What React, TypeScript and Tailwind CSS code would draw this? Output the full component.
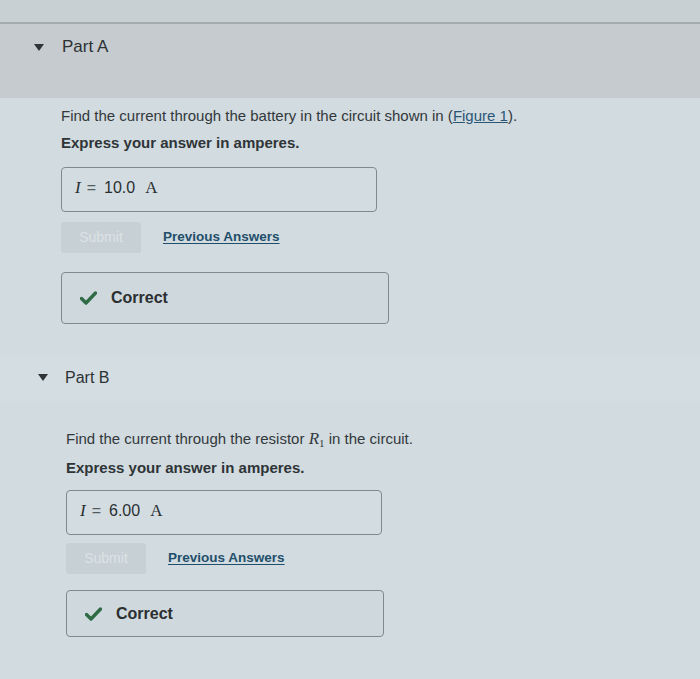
import React from "react";

function Caret() {
  return (
    <svg width="10" height="8" viewBox="0 0 10 8" className="shrink-0">
      <path d="M0 0 L10 0 L5 7 Z" fill="#2f3437" />
    </svg>
  );
}

function Check() {
  return (
    <svg width="17" height="14" viewBox="0 0 17 14" className="shrink-0">
      <path d="M1.5 7.5 L6 12 L15.5 2" fill="none" stroke="#2f6b45" strokeWidth="3.4" strokeLinecap="round" strokeLinejoin="round" />
    </svg>
  );
}

function Answer({ value }: { value: string }) {
  return (
    <div className="h-[45px] w-[316px] rounded-[4px] border border-[#7f898e] bg-[#d3dde1] flex items-center pl-[13px] pb-[4px] gap-[6px] text-[16px] text-[#2b2f31]">
      <span className="font-['Liberation_Serif'] italic text-[17px]">I</span>
      <span className="text-[#555c60]">=</span>
      <span className="ml-[2px]">{value}</span>
      <span className="ml-[4px] font-['Liberation_Serif'] text-[17px]">A</span>
    </div>
  );
}

function Actions({ mt }: { mt: string }) {
  return (
    <div className={`flex items-center gap-[22px] ${mt}`}>
      <div className="h-[31px] w-[80px] rounded-[3px] bg-[#c7d0d4] flex items-center justify-center text-[14px] text-[#dce3e6]">
        Submit
      </div>
      <span className="text-[13.5px] font-bold text-[#1f4f6b] underline underline-offset-2">Previous Answers</span>
    </div>
  );
}

function Correct({ w, h, mt }: { w: string; h: string; mt: string }) {
  return (
    <div className={`${w} ${h} ${mt} rounded-[4px] border border-[#80898d] bg-[#cfd9dd] flex items-center pl-[18px] gap-[14px]`}>
      <Check />
      <span className="text-[16px] font-bold text-[#2b2f31]">Correct</span>
    </div>
  );
}

export default function App() {
  return (
    <div className="w-[700px] min-h-[679px] bg-[#d1dbe0] font-['Liberation_Sans',Arial,sans-serif] text-[#33383b]">
      <div className="h-[24px] bg-[#c9d0d4] border-b-2 border-[#a3abaf]" />

      <section>
        <div className="h-[74px] bg-[#c5cbce] flex items-start gap-[18px] pl-[34px] pt-[20px]">
          <Caret />
          <span className="text-[17px] leading-[20px] -mt-[7px] text-[#2c3134]">Part A</span>
        </div>
        <div className="pl-[61px] pt-[9px]">
          <p className="text-[15px] leading-[18px]">
            Find the current through the battery in the circuit shown in (
            <span className="text-[#2a5675] underline">Figure 1</span>).
          </p>
          <p className="mt-[9px] text-[15px] leading-[18px] font-bold text-[#2f3437]">Express your answer in amperes.</p>
          <div className="mt-[15px]">
            <Answer value="10.0" />
          </div>
          <Actions mt="mt-[10px]" />
          <Correct w="w-[328px]" h="h-[52px]" mt="mt-[19px]" />
        </div>
      </section>

      <section className="mt-[31px]">
        <div className="h-[46px] bg-[#d4dee2] flex items-center gap-[17px] pl-[38px]">
          <Caret />
          <span className="text-[16px] leading-[20px] text-[#2c3134]">Part B</span>
        </div>
        <div className="pl-[66px] pt-[29px]">
          <p className="text-[15px] leading-[18px]">
            Find the current through the resistor{" "}
            <span className="font-['Liberation_Serif'] italic text-[17px]">R</span>
            <sub className="font-['Liberation_Serif'] text-[11px]">1</sub> in the circuit.
          </p>
          <p className="mt-[11px] text-[15px] leading-[18px] font-bold text-[#2f3437]">Express your answer in amperes.</p>
          <div className="mt-[13px]">
            <Answer value="6.00" />
          </div>
          <Actions mt="mt-[8px]" />
          <Correct w="w-[318px]" h="h-[47px]" mt="mt-[16px]" />
        </div>
      </section>
    </div>
  );
}
